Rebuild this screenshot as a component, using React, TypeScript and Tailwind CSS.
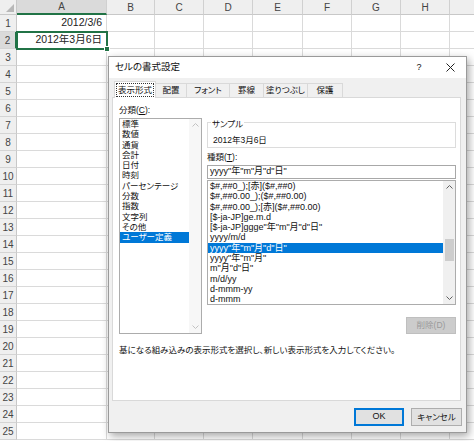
import React from "react";

const cols = [
  { l: "A", w: "w-[90px]" },
  { l: "B", w: "w-[48px]" },
  { l: "C", w: "w-[49px]" },
  { l: "D", w: "w-[49px]" },
  { l: "E", w: "w-[50px]" },
  { l: "F", w: "w-[49px]" },
  { l: "G", w: "w-[49px]" },
  { l: "H", w: "w-[49px]" },
  { l: "", w: "w-[30px]" },
];

const rows = Array.from({ length: 25 }, (_, i) => i + 1);

function Sheet() {
  return (
    <div className="flex flex-col">
      <div className="flex h-[15px]">
        <div className="relative w-[17px] shrink-0 bg-[#efefef] border-r border-b border-[#c8c8c8]">
          <svg className="absolute right-[2px] bottom-[2px]" width="8" height="8" viewBox="0 0 8 8">
            <path d="M8 0 L8 8 L0 8 Z" fill="#b8b8b8" />
          </svg>
        </div>
        {cols.map((c, i) => (
          <div
            key={i}
            className={`${c.w} shrink-0 flex items-center justify-center text-[10px] text-[#444] border-r border-[#d0d0d0] ${
              c.l === "A"
                ? "bg-[#dadada] border-b-2 border-b-[#217346]"
                : "bg-[#efefef] border-b border-b-[#c8c8c8]"
            }`}
          >
            {c.l}
          </div>
        ))}
      </div>
      {rows.map((r) => (
        <div key={r} className="flex h-[17px]">
          <div
            className={`w-[17px] shrink-0 flex items-center justify-center text-[10px] text-[#444] border-b border-[#d4d4d4] ${
              r === 2
                ? "bg-[#dadada] border-r-2 border-r-[#217346]"
                : "bg-[#efefef] border-r border-r-[#c8c8c8]"
            }`}
          >
            {r}
          </div>
          {cols.map((c, i) => (
            <div
              key={i}
              className={`${c.w} shrink-0 border-r border-b border-[#dadada] flex items-center justify-end pr-[4px] text-[10.5px] text-[#222]`}
            >
              {i === 0 && r === 1 ? "2012/3/6" : i === 0 && r === 2 ? "2012年3月6日" : ""}
            </div>
          ))}
        </div>
      ))}
    </div>
  );
}

function Up({ c }: { c: string }) {
  return (
    <svg width="7" height="4" viewBox="0 0 7 4">
      <path d="M0.5 3.5 L3.5 0.5 L6.5 3.5" fill="none" stroke={c} strokeWidth="1" />
    </svg>
  );
}
function Down({ c }: { c: string }) {
  return (
    <svg width="7" height="4" viewBox="0 0 7 4">
      <path d="M0.5 0.5 L3.5 3.5 L6.5 0.5" fill="none" stroke={c} strokeWidth="1" />
    </svg>
  );
}

const cats = ["標準", "数値", "通貨", "会計", "日付", "時刻", "パーセンテージ", "分数", "指数", "文字列", "その他", "ユーザー定義"];
const formats = [
  '$#,##0_);[赤]($#,##0)',
  '$#,##0.00_);($#,##0.00)',
  '$#,##0.00_);[赤]($#,##0.00)',
  '[$-ja-JP]ge.m.d',
  '[$-ja-JP]ggge"年"m"月"d"日"',
  'yyyy/m/d',
  'yyyy"年"m"月"d"日"',
  'yyyy"年"m"月"',
  'm"月"d"日"',
  'm/d/yy',
  'd-mmm-yy',
  'd-mmm',
];

const tabs = [
  { t: "表示形式", w: "w-[42px]" },
  { t: "配置", w: "w-[32px]" },
  { t: "フォント", w: "w-[44px]" },
  { t: "罫線", w: "w-[35px]" },
  { t: "塗りつぶし", w: "w-[45px]" },
  { t: "保護", w: "w-[36px]" },
];

function Dialog() {
  return (
    <div className="absolute left-[108px] top-[56px] w-[359px] h-[377px] flex flex-col bg-[#f0f0f0] border border-[#9a9a9a] shadow-[2px_3px_8px_rgba(0,0,0,0.35)] text-[8.5px] text-[#111] [font-feature-settings:'palt']">
      <div className="h-[21px] shrink-0 bg-white flex items-center pl-[6px]">
        <span className="text-[9.5px]">セルの書式設定</span>
        <span className="ml-auto w-[12px] text-center text-[9px] font-['Liberation_Sans',sans-serif]">?</span>
        <span className="ml-[18px] mr-[9px] w-[14px] flex items-center justify-center">
          <svg width="9" height="9" viewBox="0 0 9 9">
            <path d="M0.5 0.5 L8.5 8.5 M8.5 0.5 L0.5 8.5" stroke="#222" strokeWidth="1" />
          </svg>
        </span>
      </div>
      <div className="h-[20px] shrink-0 flex items-end pl-[5px] relative z-10 -mb-px">
        {tabs.map((t, i) =>
          i === 0 ? (
            <div key={i} className={`${t.w} h-[17px] bg-white border border-b-0 border-[#d9d9d9] flex items-center justify-center p-[1px]`}>
              <div className="w-full h-full border border-dotted border-[#333] flex items-center justify-center">{t.t}</div>
            </div>
          ) : (
            <div key={i} className={`${t.w} h-[15px] -ml-px border border-[#d9d9d9] flex items-center justify-center`}>
              {t.t}
            </div>
          )
        )}
      </div>
      <div className="ml-[3px] w-[349px] h-[304px] shrink-0 bg-white border border-[#d9d9d9] flex flex-col">
        <div className="flex pl-[6px] gap-[5px]">
          <div className="w-[83px] flex flex-col">
            <div className="mt-[6px] leading-[12px]">
              分類(<span className="underline">C</span>):
            </div>
            <div className="mt-[2px] h-[216px] border border-[#acacac] flex">
              <div className="flex-1 flex flex-col">
                {cats.map((c, i) => (
                  <div
                    key={i}
                    className={`leading-[10.3px] pl-[2px] ${i === 11 ? "bg-[#0078d7] text-white" : ""}`}
                  >
                    {c}
                  </div>
                ))}
              </div>
              <div className="w-[12px] flex flex-col justify-between items-center bg-[#f7f7f7]">
                <div className="h-[12px] flex items-center"><Up c="#c2c2c2" /></div>
                <div className="h-[12px] flex items-center"><Down c="#c2c2c2" /></div>
              </div>
            </div>
          </div>
          <div className="w-[249px] flex flex-col">
            <div className="mt-[24px] h-[26px] border border-[#dcdcdc] flex flex-col">
              <div className="-mt-[4px] ml-[3px] w-fit bg-white px-[1px] leading-[10px]">サンプル</div>
              <div className="mt-[5px] ml-[5px] leading-[12px]">2012年3月6日</div>
            </div>
            <div className="mt-[3px] leading-[12px]">
              種類(<span className="underline">T</span>):
            </div>
            <div className="mt-[2px] h-[14px] border border-[#a8a8a8] flex items-center pl-[2px] text-[9px]">
              yyyy"年"m"月"d"日"
            </div>
            <div className="mt-[1px] h-[125px] border border-[#acacac] flex">
              <div className="flex-1 flex flex-col text-[9px]">
                {formats.map((f, i) => (
                  <div
                    key={i}
                    className={`leading-[10.3px] h-[10.3px] pl-[2px] whitespace-nowrap ${i === 6 ? "bg-[#0078d7] text-white" : ""}`}
                  >
                    {f}
                  </div>
                ))}
              </div>
              <div className="w-[12px] flex flex-col bg-[#f0f0f0]">
                <div className="h-[12px] flex items-center justify-center"><Up c="#606060" /></div>
                <div className="flex-1">
                  <div className="mt-[46px] mx-auto w-[9px] h-[22px] bg-[#cdcdcd]" />
                </div>
                <div className="h-[12px] flex items-center justify-center"><Down c="#606060" /></div>
              </div>
            </div>
            <div className="mt-[12px] self-end w-[50px] h-[17px] bg-[#cccccc] border border-[#bfbfbf] flex items-center justify-center text-[#9a9a9a]">
              削除(D)
            </div>
          </div>
        </div>
        <div className="pl-[6px] mt-[10px] leading-[12px] whitespace-nowrap">
          基になる組み込みの表示形式を選択し、新しい表示形式を入力してください。
        </div>
      </div>
      <div className="flex-1 flex items-start justify-end gap-[7px] pt-[7px] pr-[4px]">
        <div className="w-[50px] h-[18px] bg-[#e1e1e1] border-2 border-[#0078d7] flex items-center justify-center text-[9px]">
          OK
        </div>
        <div className="w-[51px] h-[18px] bg-[#e1e1e1] border border-[#adadad] flex items-center justify-center">
          キャンセル
        </div>
      </div>
    </div>
  );
}

export default function App() {
  return (
    <div className="relative w-[474px] h-[441px] overflow-hidden bg-white font-['Liberation_Sans','Noto_Sans_CJK_JP',sans-serif]">
      <Sheet />
      <div className="absolute left-[16px] top-[31px] w-[92px] h-[19px] border-2 border-[#217346]" />
      <div className="absolute left-[104px] top-[46px] w-[6px] h-[6px] bg-[#217346] border border-white" />
      <Dialog />
    </div>
  );
}
